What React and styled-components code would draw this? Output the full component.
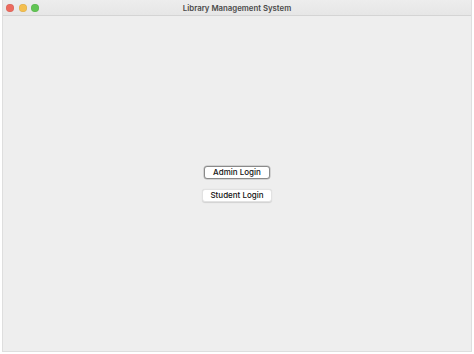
import React from "react";
import styled, { createGlobalStyle } from "styled-components";

const GlobalStyle = createGlobalStyle`
  html, body {
    margin: 0;
    padding: 0;
    background: #ffffff;
  }
  body {
    width: 474px;
    height: 354px;
    overflow: hidden;
    font-family: Inter, "Liberation Sans", Arial, sans-serif;
  }
`;

const Page = styled.div`
  width: 474px;
  height: 354px;
  padding: 0 2px 2px 2px;
  box-sizing: border-box;
`;

const Window = styled.div`
  height: 100%;
  display: flex;
  flex-direction: column;
  background: #eeeeee;
  border: 1px solid #dedede;
  border-top: none;
  box-sizing: border-box;
`;

const TitleBar = styled.div`
  height: 15px;
  flex: 0 0 auto;
  display: flex;
  align-items: center;
  position: relative;
  background: linear-gradient(#ededed, #e6e6e6);
  border-bottom: 1px solid #d4d4d4;
`;

const Lights = styled.div`
  display: flex;
  gap: 4.5px;
  padding-left: 3px;
  position: relative;
  z-index: 1;
`;

const Light = styled.span`
  width: 8px;
  height: 8px;
  border-radius: 50%;
  background: ${(p) => p.color};
  box-shadow: inset 0 0 0 0.5px rgba(0, 0, 0, 0.1);
`;

const Title = styled.div`
  position: absolute;
  left: 0;
  right: 0;
  text-align: center;
  font-size: 7.8px;
  font-weight: 600;
  color: #4a4a4a;
`;

const Content = styled.div`
  flex: 1;
  display: flex;
  flex-direction: column;
  align-items: center;
  justify-content: center;
  gap: 10px;
`;

const Button = styled.button`
  height: 13px;
  width: ${(p) => p.w}px;
  padding: 0;
  box-sizing: border-box;
  font-family: Inter, "Liberation Sans", Arial, sans-serif;
  font-size: 8px;
  font-weight: 500;
  color: #111111;
  background: #ffffff;
  border-radius: 3px;
  border: 1px solid ${(p) => (p.focused ? "#8a8a8a" : "#e2e2e2")};
  box-shadow: ${(p) =>
    p.focused ? "0 0 0 0.5px #b5b5b5" : "0 0.5px 1px rgba(0,0,0,0.12)"};
  line-height: 11px;
`;

const App = () => {
  return (
    <>
      <GlobalStyle />
      <Page>
        <Window>
          <TitleBar>
            <Lights>
              <Light color="#ec6a5e" />
              <Light color="#f4bf4f" />
              <Light color="#61c554" />
            </Lights>
            <Title>Library Management System</Title>
          </TitleBar>
          <Content>
            <Button w={66} focused>
              Admin Login
            </Button>
            <Button w={70}>Student Login</Button>
          </Content>
        </Window>
      </Page>
    </>
  );
};

export default App;
